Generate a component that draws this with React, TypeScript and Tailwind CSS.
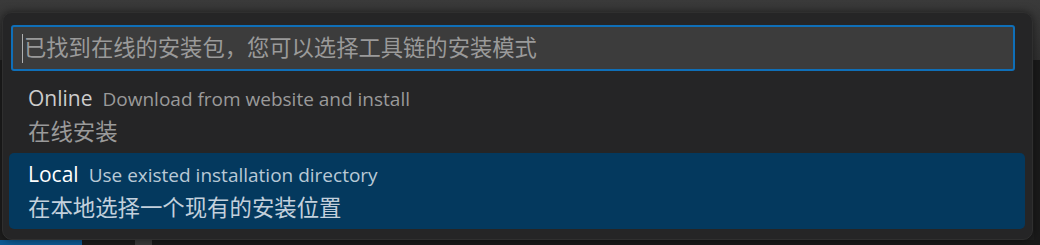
import React from 'react';

interface PickItem {
    label: string;
    description: string;
    detail: string;
}

const items: PickItem[] = [
    { label: 'Online', description: 'Download from website and install', detail: '在线安装' },
    { label: 'Local', description: 'Use existed installation directory', detail: '在本地选择一个现有的安装位置' },
];

const font = { fontFamily: '"Open Sans", "Noto Sans CJK SC", sans-serif' };

const QuickPickRow: React.FC<{ item: PickItem; selected: boolean }> = ({ item, selected }) => (
    <div
        className={`flex flex-col justify-center h-[76px] pl-[19px] rounded-[5px] ${selected ? 'bg-[#04395e]' : ''}`}
    >
        <div className="flex items-baseline h-[34px] leading-[34px]">
            <span className={`text-[21px] ${selected ? 'text-white' : 'text-[#cccccc]'}`}>{item.label}</span>
            <span className={`ml-[10px] text-[19px] ${selected ? 'text-[#b9c9d6]' : 'text-[#9a9a9a]'}`}>
                {item.description}
            </span>
        </div>
        <div className={`h-[34px] leading-[34px] text-[22.4px] ${selected ? 'text-[#c3d0dc]' : 'text-[#9a9a9a]'}`}>
            {item.detail}
        </div>
    </div>
);

const App: React.FC = () => {
    return (
        <div className="relative w-[1040px] h-[245px] overflow-hidden bg-[#1e1e1e]" style={font}>
            {/* editor behind the quick pick */}
            <div className="flex flex-col h-full">
                <div className="h-[60px] bg-gradient-to-b from-[#3a3a3a] to-[#303030]" />
                <div className="flex-1 flex justify-end">
                    <div className="w-[6px] bg-[#1a1a1a]" />
                </div>
                <div className="flex h-[5px]">
                    <div className="w-[82px] bg-[#0e5a94]" />
                    <div className="w-[53px] bg-[#1a1a1a]" />
                    <div className="w-[17px] bg-[#3a3a3a]" />
                    <div className="flex-1 bg-[#181818]" />
                </div>
            </div>

            {/* quick pick overlay */}
            <div className="absolute left-[2px] top-[12px] w-[1031px] h-[228px] rounded-[10px] bg-[#252526] border border-[#2f2f2f] shadow-[0_0_8px_rgba(0,0,0,0.5)] flex flex-col pt-[12px]">
                <div className="ml-[8px] w-[1004px] h-[46px] flex items-center bg-[#3c3c3c] border-[2px] border-[#0f6fb8] rounded-[3px] pl-[9px]">
                    <span className="w-[1px] h-[29px] bg-[#b0b0b0]" />
                    <span className="ml-[1px] text-[22.3px] text-[#9a9a9a] leading-none">
                        已找到在线的安装包，您可以选择工具链的安装模式
                    </span>
                </div>
                <div className="flex flex-col mt-[6px] ml-[6px] w-[1016px]">
                    {items.map((item, index) => (
                        <QuickPickRow key={item.label} item={item} selected={index === 1} />
                    ))}
                </div>
            </div>
        </div>
    );
};

export default App;
